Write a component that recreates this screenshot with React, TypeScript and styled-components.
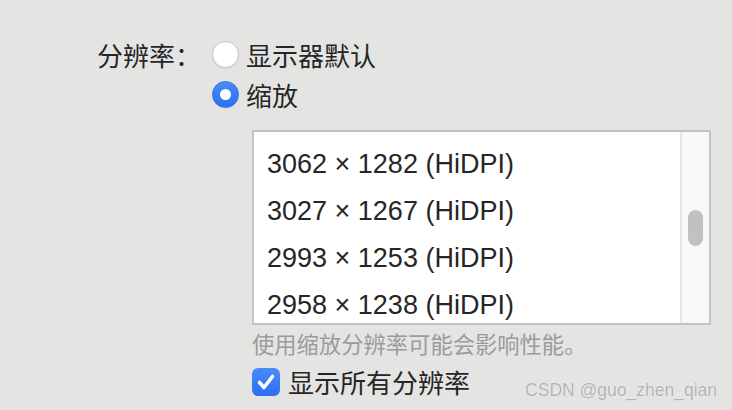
import styled, { createGlobalStyle } from "styled-components";

const GlobalStyle = createGlobalStyle`
    html, body {
        margin: 0;
        padding: 0;
        background-color: #e4e4e3;
    }
    body {
        width: 732px;
        height: 410px;
        overflow: hidden;
        font-family: "Noto Sans CJK SC", "Noto Sans", sans-serif;
        color: #262626;
    }
`;

const Page = styled.div`
    position: relative;
    width: 732px;
    height: 410px;
    box-sizing: border-box;
    padding: 41px 0 0 97px;
    display: flex;
    align-items: flex-start;
    gap: 12px;
`;

const Label = styled.div`
    width: 103px;
    font-size: 26px;
    line-height: 27px;
    white-space: nowrap;
`;

const Options = styled.div`
    display: flex;
    flex-direction: column;
    gap: 13px;
`;

const RadioRow = styled.label`
    display: flex;
    align-items: center;
    gap: 7px;
    height: 27px;
    font-size: 26px;
    line-height: 27px;
`;

const RadioCircle = styled.span<{ $checked: boolean }>`
    width: 27px;
    height: 27px;
    box-sizing: border-box;
    border-radius: 50%;
    display: flex;
    align-items: center;
    justify-content: center;
    background: ${(p) =>
        p.$checked ? "linear-gradient(#4a8bf8, #2d6ef2)" : "#ffffff"};
    border: 1px solid ${(p) => (p.$checked ? "#2f6ff0" : "#c9c9c9")};
    box-shadow: 0 0.5px 1px rgba(0, 0, 0, 0.12);
    &::after {
        content: "";
        display: ${(p) => (p.$checked ? "block" : "none")};
        width: 11px;
        height: 11px;
        border-radius: 50%;
        background: #ffffff;
    }
`;

const SubSection = styled.div`
    margin-left: 40px;
    margin-top: 9px;
    display: flex;
    flex-direction: column;
`;

const ListBox = styled.div`
    width: 459px;
    height: 195px;
    box-sizing: border-box;
    border: 2px solid #c3c3c3;
    background: #ffffff;
    display: flex;
`;

const List = styled.div`
    flex: 1;
    overflow: hidden;
    padding: 9px 0 0 13px;
`;

const ListRow = styled.div`
    height: 47px;
    line-height: 47px;
    font-family: "Liberation Sans", Arial, sans-serif;
    font-size: 27px;
    color: #262626;
    white-space: nowrap;
`;

const ScrollTrack = styled.div`
    width: 27px;
    border-left: 2px solid #e6e6e6;
    background: #f8f8f8;
    display: flex;
    flex-direction: column;
    align-items: flex-start;
`;

const ScrollThumb = styled.div`
    margin: 78px 0 0 6px;
    width: 15px;
    height: 36px;
    border-radius: 8px;
    background: #c1c1c1;
`;

const Hint = styled.div`
    margin-top: 4px;
    font-size: 22.3px;
    line-height: 28px;
    color: #9b9b9b;
    white-space: nowrap;
`;

const CheckRow = styled.label`
    margin-top: 11px;
    display: flex;
    align-items: center;
    gap: 8px;
    height: 28px;
    font-size: 26px;
    line-height: 28px;
`;

const CheckBox = styled.span`
    width: 28px;
    height: 28px;
    border-radius: 6px;
    background: linear-gradient(#4a8bf8, #2d6ef2);
    display: flex;
    align-items: center;
    justify-content: center;
    svg {
        width: 28px;
        height: 28px;
    }
`;

const Watermark = styled.div`
    position: absolute;
    right: 15px;
    bottom: 9px;
    font-family: "Liberation Sans", Arial, sans-serif;
    font-size: 17.5px;
    line-height: 21px;
    color: #b3b3b3;
    text-shadow: 0 0 1px #ffffff;
`;

const resolutions = [
    "3062 × 1282 (HiDPI)",
    "3027 × 1267 (HiDPI)",
    "2993 × 1253 (HiDPI)",
    "2958 × 1238 (HiDPI)",
];

export default function App() {
    return (
        <>
            <GlobalStyle />
            <Page>
                <Label>分辨率：</Label>
                <Options>
                    <RadioRow>
                        <RadioCircle $checked={false} />
                        显示器默认
                    </RadioRow>
                    <RadioRow>
                        <RadioCircle $checked={true} />
                        缩放
                    </RadioRow>
                    <SubSection>
                        <ListBox>
                            <List>
                                {resolutions.map((r) => (
                                    <ListRow key={r}>{r}</ListRow>
                                ))}
                            </List>
                            <ScrollTrack>
                                <ScrollThumb />
                            </ScrollTrack>
                        </ListBox>
                        <Hint>使用缩放分辨率可能会影响性能。</Hint>
                        <CheckRow>
                            <CheckBox>
                                <svg viewBox="0 0 28 28" fill="none">
                                    <path
                                        d="M7.5 14.5 12 19.5 20.5 8.5"
                                        stroke="#ffffff"
                                        strokeWidth="3.6"
                                        strokeLinecap="round"
                                        strokeLinejoin="round"
                                    />
                                </svg>
                            </CheckBox>
                            显示所有分辨率
                        </CheckRow>
                    </SubSection>
                </Options>
                <Watermark>CSDN @guo_zhen_qian</Watermark>
            </Page>
        </>
    );
}
